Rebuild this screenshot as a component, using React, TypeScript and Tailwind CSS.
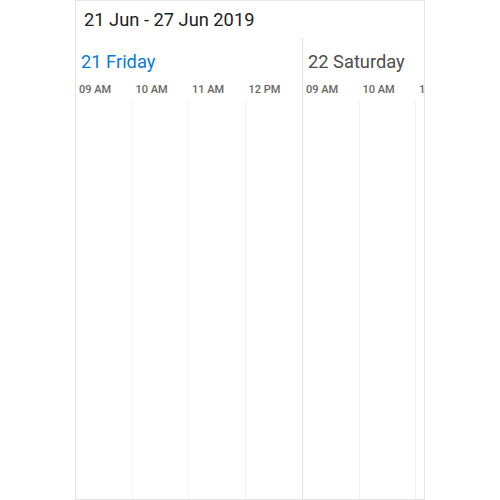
const days = [
  { label: '21 Friday', today: true, hours: ['09 AM', '10 AM', '11 AM', '12 PM'] },
  { label: '22 Saturday', today: false, hours: ['09 AM', '10 AM', '11 AM', '12 PM'] },
];

export default function App() {
  return (
    <div className="h-[500px] w-[500px] bg-white font-['Roboto',sans-serif]">
      <div className="ml-[75px] flex h-[500px] w-[350px] flex-col border border-[#e6e6e6]">
        {/* Week range header */}
        <div className="flex h-[37px] shrink-0 items-center pl-2 text-[18.3px] text-[#212121]">
          21 Jun - 27 Jun 2019
        </div>

        {/* Timeline days, clipped horizontally */}
        <div className="flex min-h-0 flex-1 overflow-hidden">
          {days.map((d) => (
            <div key={d.label} className="flex w-[227px] shrink-0 flex-col border-r border-[#e0e0e0]">
              <div
                className={`h-[44px] shrink-0 pl-[5px] pt-[12px] text-[18.3px] leading-[24px] ${
                  d.today ? 'text-[#0a7be0]' : 'text-[#4d4d4d]'
                }`}
              >
                {d.label}
              </div>
              <div className="grid h-[17px] shrink-0 grid-cols-4">
                {d.hours.map((h) => (
                  <div key={h} className="pl-[3px] text-[11px] font-medium leading-[16px] text-[#666]">
                    {h}
                  </div>
                ))}
              </div>
              <div className="grid flex-1 grid-cols-4 pt-[1px]">
                {d.hours.map((h, i) => (
                  <div key={h} className={i < 3 ? 'border-r border-[#f2f2f2]' : ''} />
                ))}
              </div>
            </div>
          ))}
        </div>
      </div>
    </div>
  );
}
